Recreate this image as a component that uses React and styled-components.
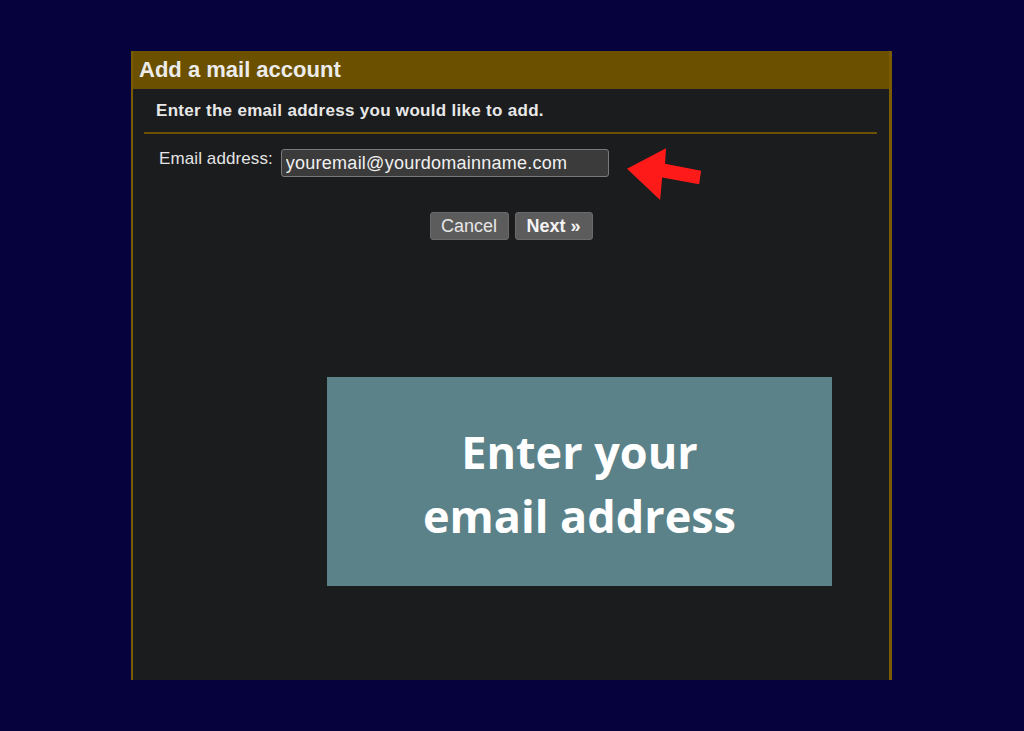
import React from "react";
import styled, { createGlobalStyle } from "styled-components";

const GlobalStyle = createGlobalStyle`
  html, body {
    margin: 0;
    padding: 0;
    background: #05023d;
  }
  body {
    font-family: "Liberation Sans", Arial, sans-serif;
  }
`;

function App() {
  return (
    <Page>
      <GlobalStyle />
      <Dialog>
        <Header>Add a mail account</Header>
        <Body>
          <Subtitle>Enter the email address you would like to add.</Subtitle>
          <Divider />
          <FormRow>
            <Label>Email address:</Label>
            <EmailInput defaultValue="youremail@yourdomainname.com" />
            <Arrow viewBox="0 0 80 56" aria-hidden="true">
              <polygon points="0,21 40,0 39,16 76,23 74,37 36,30 34,53" fill="#ff1a1a" />
            </Arrow>
          </FormRow>
          <Buttons>
            <Button>Cancel</Button>
            <Button $primary>Next »</Button>
          </Buttons>
          <Callout>
            <CalloutText>
              Enter your
              <br />
              email address
            </CalloutText>
          </Callout>
        </Body>
      </Dialog>
    </Page>
  );
}

export default App;

const Page = styled.div`
  width: 1024px;
  height: 731px;
  box-sizing: border-box;
  padding: 51px 0 0 131px;
  background: #05023d;
  overflow: hidden;
`;

const Dialog = styled.div`
  width: 761px;
  height: 629px;
  box-sizing: border-box;
  background: #1b1c1d;
  border-left: 2px solid #7a5b00;
  border-right: 3px solid #7a5b00;
  display: flex;
  flex-direction: column;
`;

const Header = styled.div`
  height: 38px;
  flex-shrink: 0;
  background: #6b5000;
  color: #ececec;
  font-size: 22px;
  font-weight: bold;
  display: flex;
  align-items: center;
  padding-left: 6px;
`;

const Body = styled.div`
  display: flex;
  flex-direction: column;
`;

const Subtitle = styled.div`
  margin: 12px 0 0 23px;
  color: #e8e8e8;
  font-size: 17px;
  letter-spacing: 0.3px;
  font-weight: bold;
  line-height: 20px;
`;

const Divider = styled.div`
  height: 2px;
  background: #6b5000;
  margin: 11px 12px 0 11px;
`;

const FormRow = styled.div`
  position: relative;
  display: flex;
  align-items: flex-start;
  gap: 8px;
  margin: 15px 0 0 26px;
`;

const Label = styled.label`
  color: #e4e4e4;
  font-size: 17px;
  letter-spacing: 0.1px;
  line-height: 20px;
`;

const EmailInput = styled.input`
  width: 328px;
  height: 28px;
  box-sizing: border-box;
  background: #3b3b3b;
  border: 1px solid #7a7a7a;
  border-radius: 3px;
  color: #f0f0f0;
  font-family: "Liberation Sans", Arial, sans-serif;
  font-size: 18px;
  letter-spacing: 0.25px;
  padding: 0 4px;
  outline: none;
`;

const Arrow = styled.svg`
  position: absolute;
  left: 468px;
  top: -1px;
  width: 78px;
  height: 55px;
`;

const Buttons = styled.div`
  display: flex;
  justify-content: center;
  gap: 6px;
  margin-top: 35px;
`;

const Button = styled.button`
  height: 28px;
  width: ${(p) => (p.$primary ? "78px" : "79px")};
  background: #5c5c5c;
  border: 1px solid #6a6a6a;
  border-radius: 3px;
  color: ${(p) => (p.$primary ? "#f4f4f4" : "#e6e6e6")};
  font-family: "Liberation Sans", Arial, sans-serif;
  font-size: 18px;
  font-weight: ${(p) => (p.$primary ? "bold" : "normal")};
  padding: 0;
`;

const Callout = styled.div`
  width: 505px;
  height: 209px;
  margin: 137px 0 0 194px;
  background: #5b8289;
  display: flex;
  align-items: center;
  justify-content: center;
`;

const CalloutText = styled.div`
  color: #ffffff;
  font-family: "Open Sans", "Noto Sans", sans-serif;
  font-weight: 700;
  font-size: 45px;
  line-height: 64px;
  text-align: center;
  margin-top: 4px;
`;
